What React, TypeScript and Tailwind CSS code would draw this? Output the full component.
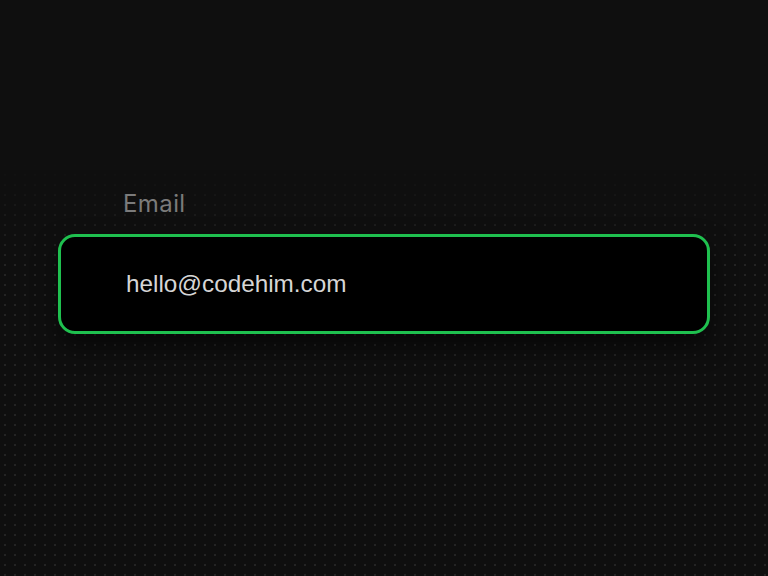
import React, { useState } from 'react';

export default function App() {
  const [email, setEmail] = useState('hello@codehim.com');

  return (
    <div className="relative h-screen w-full overflow-hidden bg-[#0f0f0f]">
      {/* dotted texture, fading in below the top */}
      <div className="pointer-events-none absolute inset-0 bg-[radial-gradient(circle,#242424_0.8px,transparent_1.2px)] bg-[length:10px_10px] [mask-image:linear-gradient(to_bottom,transparent_28%,black_45%)]" />

      <div className="relative flex flex-col items-center pt-[188px]">
        <div className="w-[652px]">
          <label
            htmlFor="email"
            className="block pl-[65px] text-[24px] leading-8 tracking-[0.4px] text-[#7b7b7b] [font-family:Inter,'Noto_Sans',sans-serif]"
          >
            Email
          </label>
          <input
            id="email"
            type="email"
            value={email}
            onChange={(e) => setEmail(e.target.value)}
            className="mt-[14px] block h-[100px] w-full rounded-[17px] border-[3px] border-[#1fc04f] bg-black pl-[65px] pr-[65px] text-[24.3px] text-[#d6d6d6] shadow-[0_12px_24px_rgba(0,0,0,0.55)] outline-none [font-family:'Liberation_Sans',Arial,sans-serif]"
          />
        </div>
      </div>
    </div>
  );
}
